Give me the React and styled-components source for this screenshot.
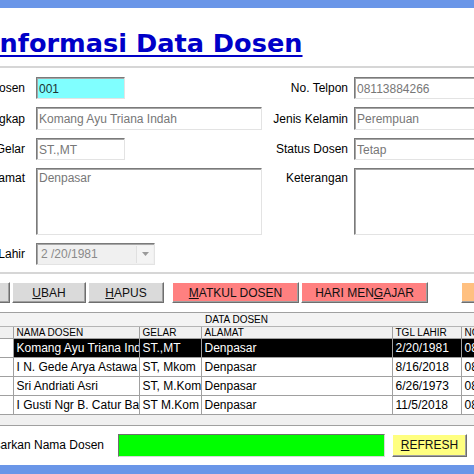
import React from 'react';
import styled, { createGlobalStyle } from 'styled-components';

const GlobalStyle = createGlobalStyle`
  html, body {
    margin: 0;
    padding: 0;
    background: #ffffff;
  }
  body {
    font-family: "Liberation Sans", Arial, sans-serif;
    font-size: 12px;
    color: #000;
  }
`;

// window is cropped on the left, so content is shifted out of view by 100px
const SHIFT = 100;

const Page = styled.div`
  width: 474px;
  height: 474px;
  overflow: hidden;
  display: flex;
  flex-direction: column;
  background: #ffffff;
`;

const BlueBar = styled.div`
  flex-shrink: 0;
  height: ${(p) => p.$h}px;
  background: #6a96e8;
  margin-top: ${(p) => (p.$bottom ? 'auto' : '0')};
`;

const Content = styled.div`
  margin-left: -${SHIFT}px;
  display: flex;
  flex-direction: column;
`;

const Title = styled.h1`
  margin: 20px 0 0 ${SHIFT - 10}px;
  font-family: "DejaVu Sans", Verdana, sans-serif;
  font-weight: bold;
  font-size: 25.6px;
  line-height: 30px;
  color: #0000c8;
  text-decoration: underline;
  text-decoration-thickness: 2px;
  text-underline-offset: 3px;
  white-space: nowrap;
`;

const Divider = styled.div`
  height: 2px;
  background: #d6d6d6;
  margin-top: ${(p) => p.$mt}px;
`;

const Form = styled.div`
  display: grid;
  grid-template-columns: 136px 226px 92px 200px;
  grid-template-rows: 22px 23px 22px 67px 22px;
  row-gap: 8px;
  margin-top: 9px;
`;

const Label = styled.label`
  display: flex;
  justify-content: flex-end;
  align-items: ${(p) => (p.$top ? 'flex-start' : 'center')};
  padding-right: ${(p) => p.$pr}px;
  padding-top: ${(p) => (p.$top ? 2 : 0)}px;
  white-space: nowrap;
  font-size: 12px;
  line-height: 16px;
`;

const Field = styled.input`
  box-sizing: border-box;
  width: ${(p) => p.$w}px;
  height: 100%;
  margin: 0;
  padding: 1px 2px 0;
  border: 1px solid;
  border-color: #7a7a7a #e3e3e3 #e3e3e3 #7a7a7a;
  box-shadow: inset 1px 1px 0 #a6a6a6;
  background: ${(p) => p.$bg || '#ffffff'};
  color: ${(p) => p.$color || '#777777'};
  font-family: "Liberation Sans", Arial, sans-serif;
  font-size: 12px;
  outline: none;
`;

const Area = styled.textarea`
  box-sizing: border-box;
  width: ${(p) => p.$w}px;
  height: 100%;
  margin: 0;
  padding: 2px 2px;
  border: 1px solid;
  border-color: #7a7a7a #e3e3e3 #e3e3e3 #7a7a7a;
  box-shadow: inset 1px 1px 0 #a6a6a6;
  background: #ffffff;
  color: #777777;
  font-family: "Liberation Sans", Arial, sans-serif;
  font-size: 12px;
  resize: none;
  outline: none;
`;

const Combo = styled.div`
  box-sizing: border-box;
  width: ${(p) => p.$w}px;
  height: 100%;
  display: flex;
  align-items: center;
  border: 1px solid;
  border-color: #7a7a7a #e3e3e3 #e3e3e3 #7a7a7a;
  box-shadow: inset 1px 1px 0 #a6a6a6;
  background: #f0f0f0;
  color: #8a8a8a;
  padding-left: 4px;
  font-size: 12px;
`;

const ComboText = styled.span`
  flex: 1;
`;

const ComboArrow = styled.span`
  width: 16px;
  height: 17px;
  margin-right: 1px;
  display: flex;
  align-items: center;
  justify-content: center;
  background: #f4f4f4;
  border-left: 1px solid #e0e0e0;
`;

const Buttons = styled.div`
  display: flex;
  margin-top: 8px;
  height: 21px;
  padding-left: ${SHIFT - 64}px;
`;

const Group = styled.div`
  display: flex;
  gap: ${(p) => p.$gap}px;
  margin-left: ${(p) => p.$ml || 0}px;
`;

const Button = styled.button`
  box-sizing: border-box;
  width: ${(p) => p.$w}px;
  height: ${(p) => p.$h || 21}px;
  margin: 0;
  padding: 0;
  border: 1px solid;
  border-color: #ffffff #6e6e6e #6e6e6e #ffffff;
  box-shadow: inset -1px -1px 0 #a0a0a0;
  background: ${(p) => p.$bg || '#dadada'};
  color: #111;
  font-family: "Liberation Sans", Arial, sans-serif;
  font-size: 12px;
  white-space: nowrap;
  flex-shrink: 0;
`;

const GridFrame = styled.div`
  box-sizing: border-box;
  margin: 9px 0 0 ${SHIFT}px;
  height: 114px;
  border-top: 1px solid #a0a0a0;
  border-bottom: 1px solid #a0a0a0;
  background: #f0f0f0;
  overflow: hidden;
`;

const Caption = styled.div`
  height: 13px;
  line-height: 14px;
  font-size: 10px;
  padding-left: 205px;
  border-bottom: 1px solid #b4b4b4;
  background: #f3f3f3;
`;

const Table = styled.table`
  border-collapse: collapse;
  table-layout: fixed;
  width: 561px;
`;

const Th = styled.th`
  height: 11px;
  padding: 0 3px;
  font-size: 10px;
  line-height: 11px;
  font-weight: normal;
  text-align: left;
  background: #f0f0f0;
  border-right: 1px solid #a0a0a0;
  border-bottom: 1px solid #a0a0a0;
  white-space: nowrap;
  overflow: hidden;
`;

const Row = styled.tr`
  background: ${(p) => (p.$selected ? '#000000' : '#ffffff')};
  color: ${(p) => (p.$selected ? '#ffffff' : '#000000')};
`;

const Td = styled.td`
  height: 18px;
  padding: 0 3px;
  font-size: 12px;
  border-right: 1px solid #a0a0a0;
  border-bottom: 1px solid #a0a0a0;
  white-space: nowrap;
  overflow: hidden;
  text-overflow: clip;
`;

const Indicator = styled.td`
  height: 18px;
  padding: 0;
  background: #ffffff;
  border-right: 1px solid #a0a0a0;
  border-bottom: 1px solid #a0a0a0;
`;

const SearchRow = styled.div`
  display: flex;
  align-items: center;
  height: 24px;
  margin-top: 7px;
`;

const SearchLabel = styled.label`
  width: ${SHIFT + 104}px;
  padding-right: 14px;
  text-align: right;
  white-space: nowrap;
  font-size: 12px;
  flex-shrink: 0;
`;

const SearchField = styled.input`
  box-sizing: border-box;
  width: 267px;
  height: 23px;
  margin: 0 7px 0 0;
  border: 1px solid;
  border-color: #6e6e6e #d8d8d8 #d8d8d8 #6e6e6e;
  background: #00ff00;
  outline: none;
  flex-shrink: 0;
`;

const rows = [
  ['Komang Ayu Triana Indah', 'ST.,MT', 'Denpasar', '2/20/1981', '08113884266'],
  ['I N. Gede Arya Astawa', 'ST, Mkom', 'Denpasar', '8/16/2018', '081337456120'],
  ['Sri Andriati Asri', 'ST, M.Kom', 'Denpasar', '6/26/1973', '081236589712'],
  ['I Gusti Ngr B. Catur Bayu', 'ST M.Kom', 'Denpasar', '11/5/2018', '085738226541'],
];

const Arrow = () => (
  <svg width="7" height="4" viewBox="0 0 7 4">
    <path d="M0 0 L7 0 L3.5 4 Z" fill="#9a9a9a" />
  </svg>
);

export default function App() {
  return (
    <Page>
      <GlobalStyle />
      <BlueBar $h={8} />
      <Content>
        <Title>Informasi Data Dosen</Title>
        <Divider $mt={8} />

        <Form>
          <Label $pr={11}>ID Dosen</Label>
          <div><Field $w={89} $bg="#80ffff" $color="#1d3535" defaultValue="001" /></div>
          <Label $pr={6}>No. Telpon</Label>
          <div><Field $w={200} defaultValue="08113884266" /></div>

          <Label $pr={11}>Nama Lengkap</Label>
          <div><Field $w={226} defaultValue="Komang Ayu Triana Indah" /></div>
          <Label $pr={6}>Jenis Kelamin</Label>
          <div><Field $w={200} defaultValue="Perempuan" /></div>

          <Label $pr={11}>Gelar</Label>
          <div><Field $w={89} defaultValue="ST.,MT" /></div>
          <Label $pr={6}>Status Dosen</Label>
          <div><Field $w={200} defaultValue="Tetap" /></div>

          <Label $pr={11} $top>Alamat</Label>
          <div><Area $w={226} defaultValue="Denpasar" /></div>
          <Label $pr={6} $top>Keterangan</Label>
          <div><Area $w={200} defaultValue="" /></div>

          <Label $pr={11}>Tanggal Lahir</Label>
          <div>
            <Combo $w={119}>
              <ComboText>2 /20/1981</ComboText>
              <ComboArrow><Arrow /></ComboArrow>
            </Combo>
          </div>
          <div />
          <div />
        </Form>

        <Divider $mt={7} />

        <Buttons>
          <Group $gap={2}>
            <Button $w={74}><u>S</u>IMPAN</Button>
            <Button $w={74}><u>U</u>BAH</Button>
            <Button $w={76}><u>H</u>APUS</Button>
          </Group>
          <Group $gap={2} $ml={8}>
            <Button $w={127} $bg="#ff8080"><u>M</u>ATKUL DOSEN</Button>
            <Button $w={127} $bg="#ff8080">HARI MEN<u>G</u>AJAR</Button>
          </Group>
          <Group $gap={0} $ml={33}>
            <Button $w={76} $bg="#ffc080"><u>K</u>ELUAR</Button>
          </Group>
        </Buttons>

        <GridFrame>
          <Caption>DATA DOSEN</Caption>
          <Table>
            <colgroup>
              <col style={{ width: 13 }} />
              <col style={{ width: 126 }} />
              <col style={{ width: 62 }} />
              <col style={{ width: 191 }} />
              <col style={{ width: 69 }} />
              <col style={{ width: 100 }} />
            </colgroup>
            <thead>
              <tr>
                <Th />
                <Th>NAMA DOSEN</Th>
                <Th>GELAR</Th>
                <Th>ALAMAT</Th>
                <Th>TGL LAHIR</Th>
                <Th>NO TELPON</Th>
              </tr>
            </thead>
            <tbody>
              {rows.map((r, i) => (
                <Row key={i} $selected={i === 0}>
                  <Indicator />
                  {r.map((c, j) => (
                    <Td key={j}>{c}</Td>
                  ))}
                </Row>
              ))}
            </tbody>
          </Table>
        </GridFrame>

        <SearchRow>
          <SearchLabel>Cari Berdasarkan Nama Dosen</SearchLabel>
          <SearchField />
          <Button $w={75} $h={23} $bg="#ffff80"><u>R</u>EFRESH</Button>
        </SearchRow>
      </Content>
      <BlueBar $h={9} $bottom />
    </Page>
  );
}
